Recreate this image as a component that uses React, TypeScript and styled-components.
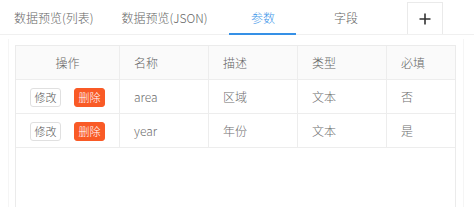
import React, { useState } from "react";
import styled, { createGlobalStyle } from "styled-components";

const GlobalStyle = createGlobalStyle`
  html, body {
    margin: 0;
    padding: 0;
    background: #fff;
    overflow: hidden;
  }
  body {
    font-family: "Microsoft YaHei", "Noto Sans CJK SC", "Liberation Sans", sans-serif;
    font-size: 12px;
    font-weight: 300;
    color: #666;
  }
`;

const tabs = ["数据预览(列表)", "数据预览(JSON)", "参数", "字段"];

const params = [
  { name: "area", desc: "区域", type: "文本", required: "否" },
  { name: "year", desc: "年份", type: "文本", required: "是" },
];

export default function App() {
  const [active, setActive] = useState(2);

  return (
    <Page>
      <GlobalStyle />
      <TabBar>
        <TabList>
          {tabs.map((t, i) => (
            <Tab key={t} $active={i === active} onClick={() => setActive(i)}>
              {t}
            </Tab>
          ))}
        </TabList>
        <AddButton>
          <svg width="12" height="12" viewBox="0 0 12 12">
            <path d="M6 0.5v11M0.5 6h11" stroke="#333" strokeWidth="1.6" fill="none" />
          </svg>
        </AddButton>
      </TabBar>

      <Pane>
        <Table>
          <HeadRow>
            <HeadCell $center>操作</HeadCell>
            <HeadCell>名称</HeadCell>
            <HeadCell>描述</HeadCell>
            <HeadCell>类型</HeadCell>
            <HeadCell $last>必填</HeadCell>
          </HeadRow>
          {params.map((p) => (
            <Row key={p.name}>
              <Cell $center>
                <Actions>
                  <EditButton>修改</EditButton>
                  <DeleteButton>删除</DeleteButton>
                </Actions>
              </Cell>
              <Cell>{p.name}</Cell>
              <Cell>{p.desc}</Cell>
              <Cell>{p.type}</Cell>
              <Cell $last>{p.required}</Cell>
            </Row>
          ))}
        </Table>
      </Pane>
    </Page>
  );
}

const Page = styled.div`
  width: 474px;
  height: 207px;
  overflow: hidden;
`;

const TabBar = styled.div`
  display: flex;
  align-items: flex-end;
  height: 35px;
  padding-left: 8px;
  border-bottom: 1px solid #f0f0f0;
  box-sizing: border-box;
`;

const TabList = styled.div`
  display: flex;
  gap: 16px;
`;

const Tab = styled.div<{ $active?: boolean }>`
  min-width: 67px;
  padding: 0 6px;
  height: 34px;
  line-height: 34px;
  text-align: center;
  box-sizing: border-box;
  font-size: 12px;
  color: ${(p) => (p.$active ? "#3b95e9" : "#666")};
  border-bottom: 2px solid ${(p) => (p.$active ? "#3590e6" : "transparent")};
  margin-bottom: -1px;
  white-space: nowrap;
  cursor: pointer;
`;

const AddButton = styled.div`
  width: 36px;
  height: 32px;
  margin-left: 28px;
  border: 1px solid #eaeaea;
  border-bottom: none;
  box-sizing: border-box;
  display: flex;
  align-items: center;
  justify-content: center;
  background: #fff;
  cursor: pointer;
`;

const Pane = styled.div`
  margin: 4px 10px 0 8px;
  padding: 6px 1px 0 6px;
  border-left: 1px solid #f5f5f5;
  border-right: 1px solid #f5f5f5;
  height: 200px;
  box-sizing: border-box;
`;

const Table = styled.div`
  width: 441px;
  height: 190px;
  border: 1px solid #ebebeb;
  border-bottom: none;
  box-sizing: border-box;
`;

const HeadRow = styled.div`
  display: grid;
  grid-template-columns: 104px 89px 89px 89px 1fr;
  height: 34px;
  background: #fafafa;
  border-bottom: 1px solid #ededed;
  box-sizing: border-box;
`;

const Row = styled(HeadRow)`
  background: #fff;
`;

const HeadCell = styled.div<{ $center?: boolean; $last?: boolean }>`
  display: flex;
  align-items: center;
  justify-content: ${(p) => (p.$center ? "center" : "flex-start")};
  padding-left: ${(p) => (p.$center ? "0" : "14px")};
  border-right: ${(p) => (p.$last ? "none" : "1px solid #ededed")};
  color: #666;
  font-size: 12px;
`;

const Cell = styled(HeadCell)`
  color: #6e6e6e;
`;

const Actions = styled.div`
  display: flex;
  gap: 13px;
  padding-top: 1px;
`;

const EditButton = styled.div`
  width: 31px;
  height: 19px;
  line-height: 17px;
  text-align: center;
  font-size: 11px;
  color: #555;
  border: 1px solid #e0e0e0;
  border-radius: 3px;
  box-sizing: border-box;
  background: #fff;
  cursor: pointer;
`;

const DeleteButton = styled(EditButton)`
  color: #fff;
  background: #f95a26;
  border-color: #f95a26;
`;
